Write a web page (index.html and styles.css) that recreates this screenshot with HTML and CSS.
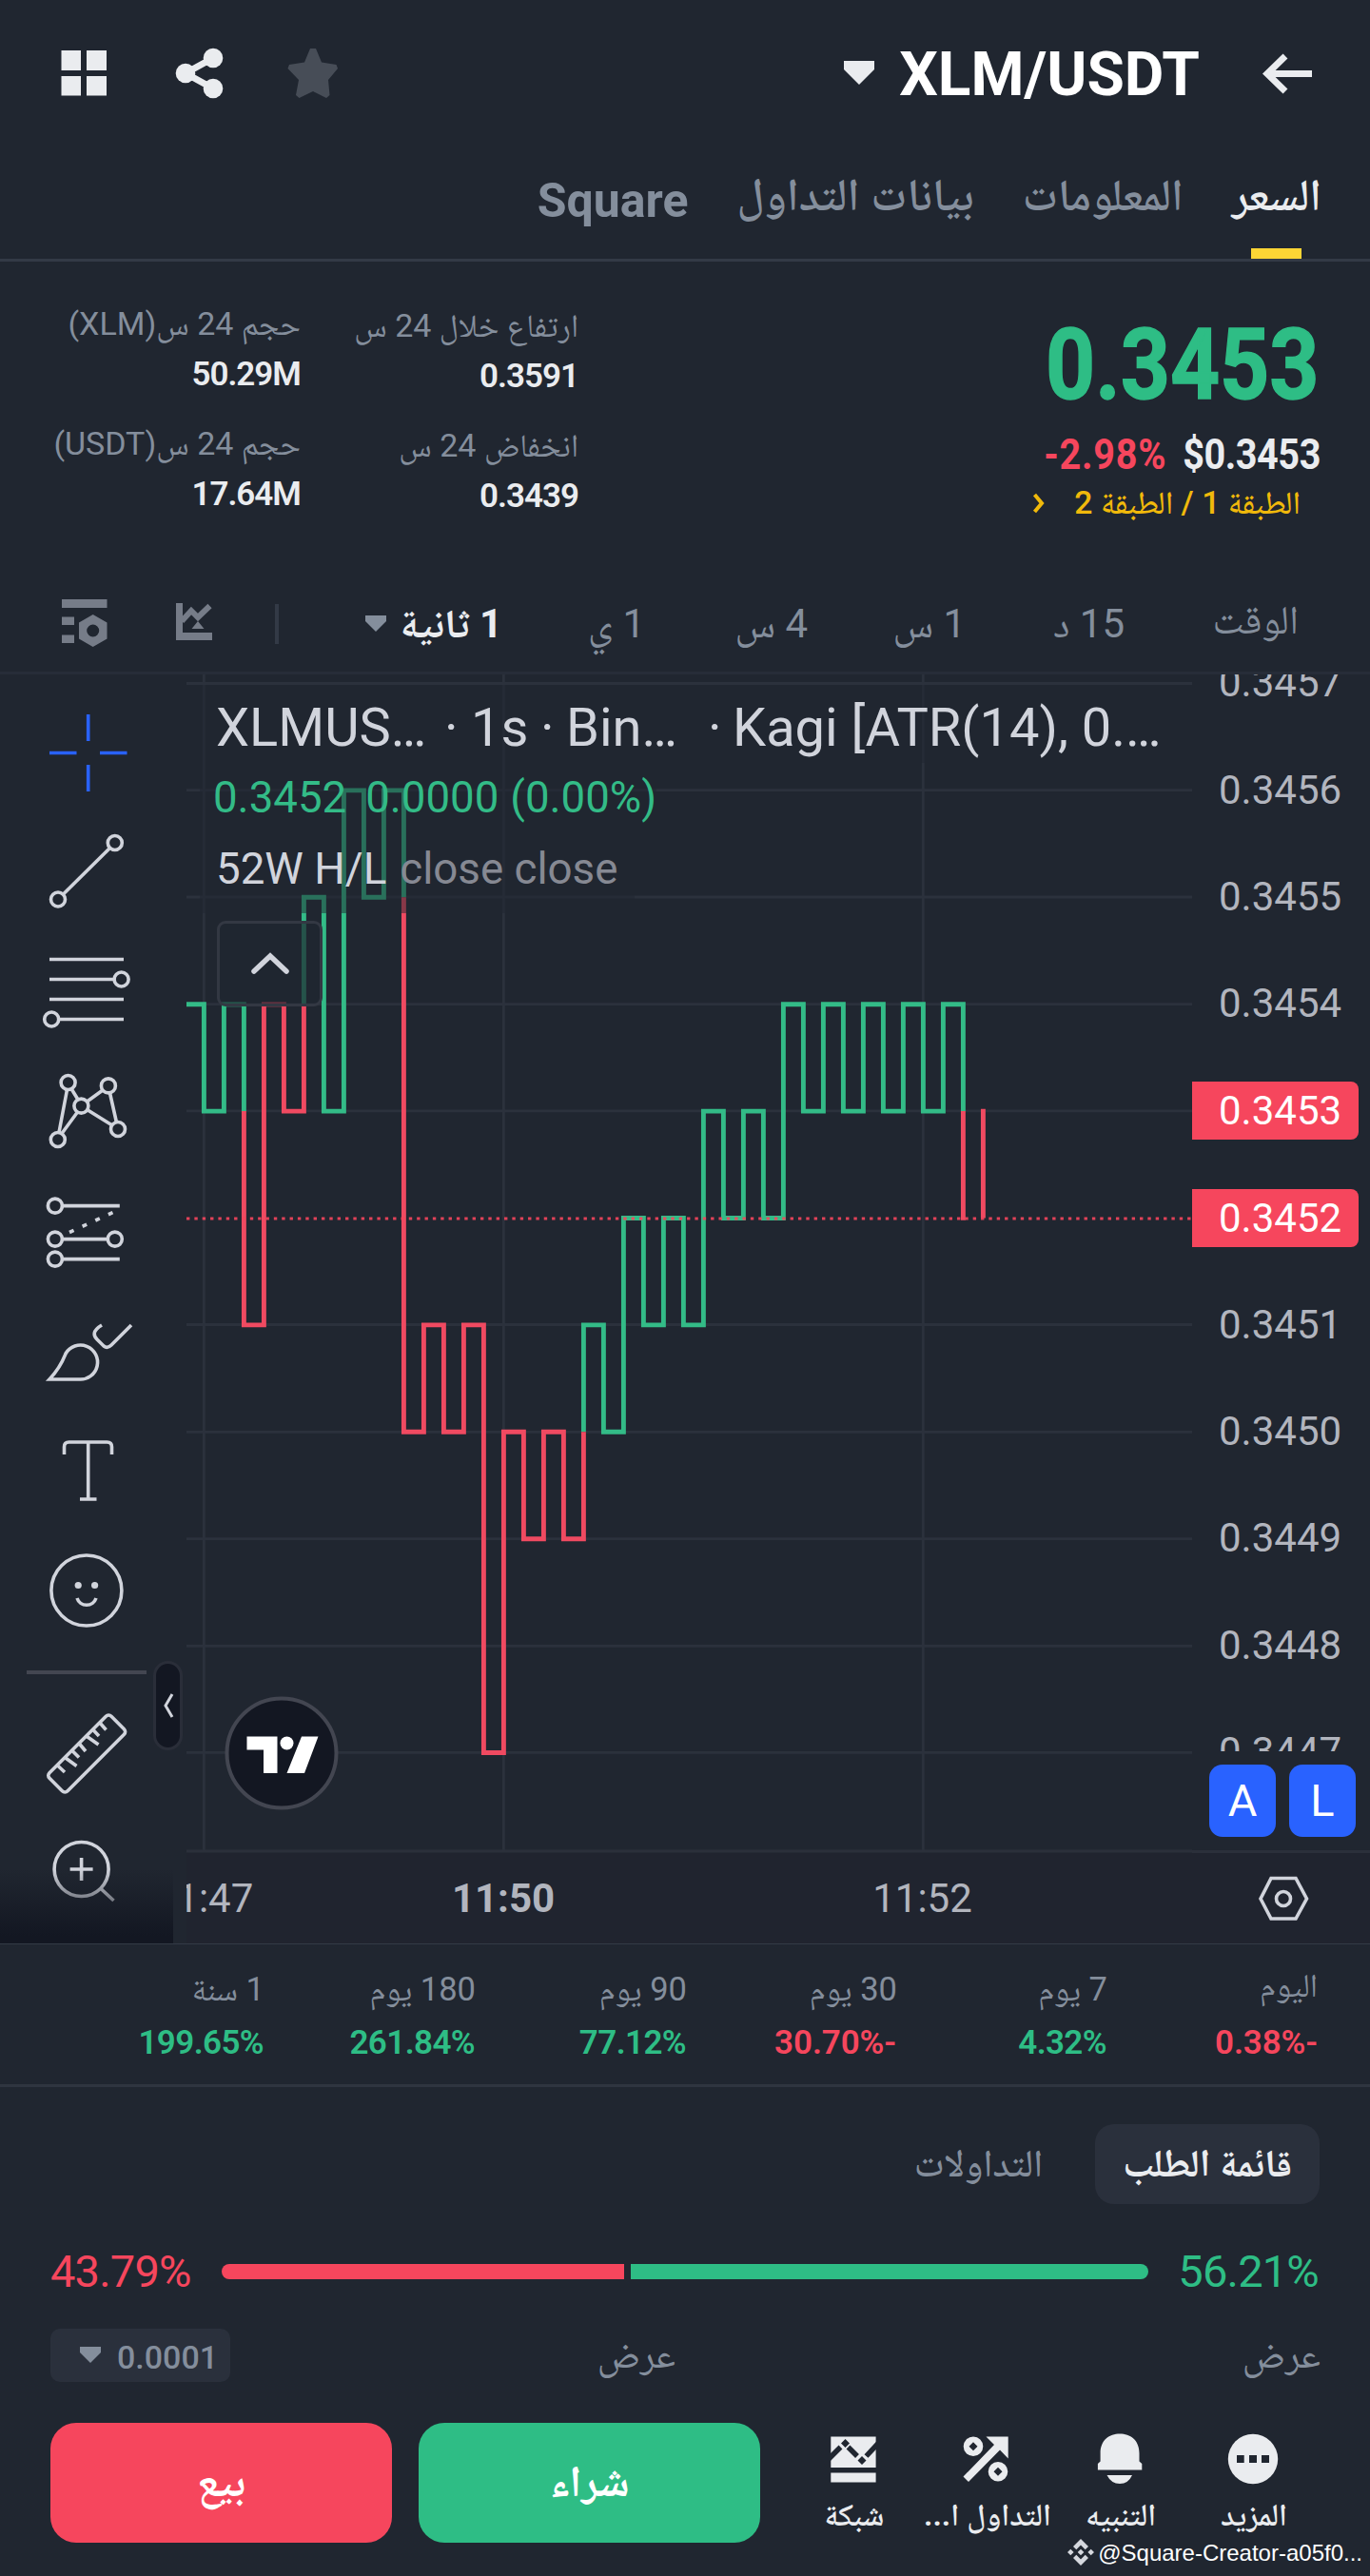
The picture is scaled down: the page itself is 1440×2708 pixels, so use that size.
FILE: index.html
```html
<!DOCTYPE html>
<html lang="ar">
<head>
<meta charset="utf-8">
<title>XLM/USDT</title>
<link rel="stylesheet" href="styles.css">
</head>
<body>
<header class="header">
  <svg class="header-actions" viewBox="53 40 320 74" fill="#eaecef">
    <path d="M64.500 53H85V74H64.500ZM91 53H112V74H91ZM64.500 80H85V100.500H64.500ZM91 80H112V100.500H91Z"/>
    <path d="M224 61 195 77 224 93" fill="none" stroke="#eaecef" stroke-width="7"/>
    <circle cx="224" cy="61" r="10.300"/><circle cx="195" cy="77" r="10.300"/><circle cx="224" cy="93" r="10.300"/>
    <path fill="#474d57" d="M326 51H332L338 65.500 353.500 68 355 72 345 84 346.500 100 343 103 329 96 314.500 103 311 100 314 84 302.500 72 304 68 320 65.500Z"/>
  </svg>
  <div class="pair">
    <svg width="32" height="26" viewBox="887 64 32 26"><path fill="#eaecef" d="M887 64H919V73L903 89 887 73Z"/></svg>
    <h1>XLM/USDT</h1>
    <svg class="back" width="54" height="44" viewBox="1326 55 54 44" fill="none" stroke="#eaecef" stroke-width="7"><path d="M1351 59 1332 77.500 1351 96M1332 77.500H1379"/></svg>
  </div>
</header>

<nav class="tabs">
  <span class="tab latin">Square</span>
  <span class="tab wide">بيانات التداول</span>
  <span class="tab">المعلومات</span>
  <span class="tab active">السعر</span>
</nav>

<section class="summary">
  <div class="stats volume">
    <span class="label" dir="rtl">حجم 24 س(XLM)</span><b>50.29M</b>
    <span class="label second" dir="rtl">حجم 24 س(USDT)</span><b>17.64M</b>
  </div>
  <div class="stats range">
    <span class="label" dir="rtl">ارتفاع خلال 24 س</span><b>0.3591</b>
    <span class="label second" dir="rtl">انخفاض 24 س</span><b>0.3439</b>
  </div>
  <div class="price">
    <div class="last">0.3453</div>
    <div class="change"><span class="down">-2.98%</span><span>$0.3453</span></div>
    <div class="layers">
      <svg width="14" height="22" viewBox="0 0 14 22"><path d="M2.500 2 10 11 2.500 20" fill="none" stroke="#f0b90b" stroke-width="4"/></svg>
      <span dir="rtl">الطبقة 1 / الطبقة 2</span>
    </div>
  </div>
</section>

<div class="intervals">
  <svg width="150" height="60" viewBox="0 626 150 60" fill="#767c88">
    <path d="M65 630H112.500V639H65ZM65 648.500H78V657H65ZM65 667.500H78V676H65Z"/>
    <path fill-rule="evenodd" d="M97.700 646 112.500 654.500V671.500L97.700 680 83 671.500V654.500ZM97.700 656.500A6.500 6.500 0 1 0 97.700 669.500 6.500 6.500 0 1 0 97.700 656.500Z"/>
  </svg>
  <svg width="120" height="60" viewBox="150 626 120 60" fill="#767c88">
    <path d="M185 634H192V665H223V673H185ZM208 653 214.500 661H201.500Z"/>
    <path d="M191 653 201 642 208 649 220.500 637" fill="none" stroke="#767c88" stroke-width="6"/>
  </svg>
  <i class="rule"></i>
  <svg class="caret" width="22" height="18" viewBox="0 0 22 18"><path fill="#848e9c" d="M0 0H22V6L11 17 0 6Z"/></svg>
  <span class="active" dir="rtl">1 ثانية</span>
  <span dir="rtl">1 ي</span>
  <span dir="rtl">4 س</span>
  <span dir="rtl">1 س</span>
  <span dir="rtl">15 د</span>
  <span class="word" dir="rtl">الوقت</span>
</div>

<section class="chart">
  <div class="tools">
    <svg height="131" viewBox="0 709 182 131" class="cross"><path d="M92.700 751V779M92.700 804V832M52 791.500H80.500M105 791.500H133.500"/></svg>
    <svg height="120" viewBox="0 840 182 120"><circle cx="61" cy="945.500" r="7.500"/><circle cx="120.800" cy="886" r="7.500"/><path d="M66.500 940 115.500 891.500"/></svg>
    <svg height="150" viewBox="0 960 182 150"><path d="M52 1008.500H130M52 1029.500H120M52 1050.500H130M62 1071.500H130"/><circle cx="127.600" cy="1029.500" r="7.500"/><circle cx="54.200" cy="1071.500" r="7.500"/></svg>
    <svg height="120" viewBox="0 1110 182 120"><path d="M70.500 1145.500 62 1190.500M75 1144.500 82 1156M108 1146 91.500 1158M115.500 1149 122.500 1180M91.500 1166.500 118 1183M81.500 1169 65 1191.500"/><circle cx="71.600" cy="1138" r="7.500"/><circle cx="113.900" cy="1141.400" r="7.500"/><circle cx="85.400" cy="1162.600" r="7.500"/><circle cx="60.800" cy="1198" r="7.500"/><circle cx="124" cy="1187" r="7.500"/></svg>
    <svg height="130" viewBox="0 1230 182 130"><path d="M65.500 1267.600H125.800M65.500 1302.600H113.300M65.500 1323.600H125.800"/><path stroke-dasharray="5 10" d="M73 1295.500 121 1273.500"/><circle cx="57.900" cy="1267.600" r="7.500"/><circle cx="57.900" cy="1302.600" r="7.500"/><circle cx="120.800" cy="1302.600" r="7.500"/><circle cx="57.900" cy="1323.600" r="7.500"/></svg>
    <svg height="120" viewBox="0 1360 182 120"><path d="M52 1450C64 1437 67 1428 69 1423A18 18 0 1 1 83 1450ZM107 1393C97 1399 98 1404 102 1408L109 1415Q113 1418 117 1414L138 1393"/></svg>
    <svg height="130" viewBox="0 1480 182 130"><path d="M67.500 1529V1521Q67.500 1516 72.500 1516H112.500Q117.500 1516 117.500 1521V1529M92.700 1516V1576M84 1576H101.500"/></svg>
    <svg height="146" viewBox="0 1610 182 146"><circle cx="90.900" cy="1672" r="37"/><path d="M81 1680A10.500 10.500 0 0 0 101 1680"/><g fill="#d1d4dc" stroke="none"><circle cx="82.200" cy="1666.500" r="3.600"/><circle cx="99.600" cy="1666.500" r="3.600"/></g></svg>
    <hr>
    <svg height="150" viewBox="0 1760 182 150"><rect x="-46" y="-13.500" width="92" height="27" rx="4" transform="translate(91.200 1843.500) rotate(-45)"/><path d="M59.500 1856 68 1864M67.500 1848 80.500 1857.500M75 1840.500 83 1848.500M82.500 1833 90 1842M90 1825.500 103.500 1835M97 1818.500 104 1826M104 1811 111.500 1819.500" transform="translate(0 -1)"/></svg>
    <svg height="133" viewBox="0 1910 182 133"><circle cx="85.600" cy="1965" r="28.500"/><path d="M85.600 1953V1977M73.600 1965H97.600M106 1985.500 119.500 1998"/></svg>
    <div class="fade"></div>
    <div class="handle"><svg width="12" height="28" viewBox="0 0 12 28"><path d="M10 2 3 14 10 26" fill="none" stroke="#d1d4dc" stroke-width="3"/></svg></div>
  </div>

  <div class="plot">
    <svg class="series" width="1057" height="1239" viewBox="196 709 1057 1239" fill="none">
      <path stroke="#2b313c" stroke-width="2.800" d="M196 718.500H1253M196 830.700H1253M196 943H1253M196 1055.600H1253M196 1167.800H1253M196 1392.500H1253M196 1505.300H1253M196 1617.600H1253M196 1730.300H1253M196 1842.300H1253M214.400 706V1946M529.400 706V1946M970.300 706V1946"/>
      <path stroke="#2b303b" stroke-width="3" d="M196 1946H1253"/>
      <g class="kagi" transform="translate(214.400 718.500) scale(21 112.400)">
        <path class="up" d="M-.9 3H0V4H1V3H2V4M5 3V2H6V4H7V1H8V2H9V1H10V2M19 7V6H20V7H21V5H22V6H23V5H24V6H25V4H26V5H27V4H28V5H29V3H30V4H31V3H32V4H33V3H34V4H35V3H36V4H37V3H38V4"/>
        <path class="dn" d="M2 4V6H3V3H4V4H5V3M10 2V7H11V6H12V7H13V6H14V10H15V7H16V8H17V7H18V8H19V7M38 4V5.020M39 3.980V5"/>
      </g>
      <path stroke="#f6465d" stroke-width="3" stroke-dasharray="3.400 4.950" opacity=".9" d="M196 1281H1253"/>
    </svg>
    <div class="legend">
      <div class="line title"><span>XLMUS…</span><span>·</span><span>1s</span><span>·</span><span>Bin…</span><span>·</span><span>Kagi [ATR(14), 0.…</span></div>
      <div class="line quote"><span>0.3452</span><span>0.0000</span><span>(0.00%)</span></div>
      <div class="line study"><span>52W H/L</span><span class="muted">close close</span></div>
      <div class="collapse"><svg width="42" height="26" viewBox="0 0 42 26"><path d="M4 21 21 5 38 21" fill="none" stroke="#d1d4dc" stroke-width="5.500" stroke-linecap="round"/></svg></div>
    </div>
    <svg class="tv" width="120" height="124" viewBox="0 0 120 124">
      <circle cx="60" cy="62" r="57.500" fill="#131722" stroke="#434651" stroke-width="4"/>
      <path fill="#fff" d="M23.500 44.500H55.500V83H41V58.500H23.500ZM81 44.500H98.500L84 83H65.500Z"/><circle cx="65.500" cy="51.500" r="7" fill="#fff"/>
    </svg>
  </div>

  <div class="scale">
    <div class="prices">
      <span>0.3457</span><span>0.3456</span><span>0.3455</span><span>0.3454</span><span><b>0.3453</b></span><span><b>0.3452</b></span><span>0.3451</span><span>0.3450</span><span>0.3449</span><span>0.3448</span><span>0.3447</span>
    </div>
    <div class="modes"><span>A</span><span>L</span></div>
  </div>

  <div class="times"><span>11:47</span><b>11:50</b><span>11:52</span></div>
  <div class="gear">
    <svg width="54" height="48" viewBox="1322 1972 54 48" fill="none" stroke="#d1d4dc" stroke-width="3.600"><path d="M1336 1974.500H1362L1373.500 1996 1362 2017H1336L1325 1996Z"/><circle cx="1349" cy="1996" r="7.500"/></svg>
  </div>
</section>

<section class="periods">
  <div><span dir="rtl">1 سنة</span><b class="up">199.65%</b></div>
  <div><span dir="rtl">180 يوم</span><b class="up">261.84%</b></div>
  <div><span dir="rtl">90 يوم</span><b class="up">77.12%</b></div>
  <div><span dir="rtl">30 يوم</span><b class="down">30.70%-</b></div>
  <div><span dir="rtl">7 يوم</span><b class="up">4.32%</b></div>
  <div><span class="word" dir="rtl">اليوم</span><b class="down">0.38%-</b></div>
</section>

<nav class="book-tabs">
  <span>التداولات</span>
  <span class="active">قائمة الطلب</span>
</nav>

<div class="ratio">
  <span class="down">43.79%</span>
  <div class="bar"><i class="sell-part"></i><i class="buy-part"></i></div>
  <span class="up">56.21%</span>
</div>

<div class="book-head">
  <div class="step"><svg width="22" height="18" viewBox="0 0 22 18"><path fill="#848e9c" d="M0 0H22V6L11 17 0 6Z"/></svg><span>0.0001</span></div>
  <span class="mid">عرض</span>
  <span>عرض</span>
</div>

<footer class="footer">
  <button class="sell">بيع</button>
  <button class="buy">شراء</button>
  <div class="links">
    <div><svg width="50" height="54" viewBox="872 2558 50 54"><path fill="#eaecef" d="M873.300 2561.500H920.600V2594H873.300ZM873.300 2599.500H920.600V2609.500H873.300Z"/><path fill="none" stroke="#202630" stroke-width="5.500" d="M871 2585 883.500 2572.500M891.500 2572.500 901 2582M910.500 2582 923 2568.500"/><path fill="#202630" d="M888.500 2564 893 2568.500 888.500 2573 884 2568.500ZM906 2582 910.500 2586.500 906 2591 901.500 2586.500Z"/></svg><span dir="rtl">شبكة</span></div>
    <div><svg width="50" height="54" viewBox="1013 2558 50 54"><g fill="#eaecef"><path d="M1037.500 2561.500H1060.700V2584.500L1052 2575.500 1019 2609 1013.500 2603.500 1046 2570Z"/><path fill-rule="evenodd" d="M1024 2561.500A10.300 10.300 0 1 0 1024 2582.100 10.300 10.300 0 1 0 1024 2561.500ZM1024 2567.300 1028.500 2571.800 1024 2576.300 1019.500 2571.800ZM1050 2588A10.300 10.300 0 1 0 1050 2608.600 10.300 10.300 0 1 0 1050 2588ZM1050 2593.800 1054.500 2598.300 1050 2602.800 1045.500 2598.300Z"/></g></svg><span dir="rtl">التداول ا...</span></div>
    <div><svg width="50" height="54" viewBox="1152 2558 50 54" fill="#eaecef"><path d="M1156.600 2587.500V2579C1156.600 2565 1166 2558.500 1177 2558.500S1197.500 2565 1197.500 2579V2587.500L1200.300 2590V2596.500H1153.900V2590ZM1163.500 2602H1190Q1186 2611 1177 2611T1163.500 2602Z"/></svg><span>التنبيه</span></div>
    <div><svg width="54" height="54" viewBox="1290 2558 54 54"><circle cx="1317" cy="2585" r="26.200" fill="#eaecef"/><path fill="#202630" d="M1300 2581H1307.700V2589H1300ZM1313 2581H1321V2589H1313ZM1326 2581H1334V2589H1326Z"/></svg><span>المزيد</span></div>
  </div>
  <div class="watermark">
    <svg width="28" height="28" viewBox="0 0 28 28" fill="#d5d8de"><path d="M14 0 22 8 18.700 11.300 14 6.600 9.300 11.300 6 8ZM14 28 22 20 18.700 16.700 14 21.400 9.300 16.700 6 20ZM14 10.700 17.300 14 14 17.300 10.700 14ZM3.300 10.700 6.600 14 3.300 17.300 0 14ZM24.700 10.700 28 14 24.700 17.300 21.400 14Z"/></svg>
    <span>@Square-Creator-a05f0...</span>
  </div>
</footer>
</body>
</html>
```
FILE: styles.css
```css
* { box-sizing: border-box; }
body {
  margin: 0;
  width: 1440px;
  height: 2708px;
  overflow: hidden;
  background: #202630;
  color: #eaecef;
  font-family: Roboto, "Noto Naskh Arabic", "Noto Sans Arabic", sans-serif;
  white-space: nowrap;
}
svg { display: block; flex: none; }
.up { color: #2ebd85; }
.down { color: #f6465d; }

.header { display: flex; justify-content: space-between; height: 154px; padding: 0 60px 0 53px; align-items: center; }
.header-actions { width: 320px; height: 74px; }
.pair { display: flex; align-items: center; }
.pair h1 { margin: 0 65px 0 26px; font-size: 64px; line-height: 80px; font-weight: 700; color: #fff; padding-top: 4px; }

.tabs { display: flex; justify-content: flex-end; height: 121px; padding-right: 51px; border-bottom: 3px solid #333a46; gap: 51px; font-size: 47px; font-weight: 600; line-height: 60px; color: #848e9c; padding-top: 21px; }
.tab.wide { font-size: 48px; }
.tab.latin { font-size: 50px; font-weight: 700; padding-top: 6px; }
.tab.active { color: #eaecef; display: flex; flex-direction: column; align-items: center; }
.tab.active::after { content: ""; width: 53px; height: 11px; margin-top: 26px; background: #fcd535; }

.summary { display: flex; height: 325px; padding-right: 53px; }
.stats { display: flex; flex-direction: column; align-items: flex-end; padding-top: 43px; font-size: 34px; line-height: 49px; }
.stats.volume { width: 316px; padding-top: 41px; }
.stats.range { width: 292px; }
.stats .label { color: #848e9c; }
.stats .second { margin-top: 24px; }
.stats b { font-size: 35px; font-weight: 600; letter-spacing: -1px; padding-top: 4px; }
.price { margin-left: auto; display: flex; flex-direction: column; align-items: flex-end; padding-top: 61px; }
.last { font-size: 104px; line-height: 95px; font-weight: 700; color: #2ebd85; -webkit-text-stroke: 1.5px #2ebd85; transform: scaleX(.875); transform-origin: right; }
.change { display: flex; gap: 19px; margin-top: 17px; font-size: 44px; line-height: 60px; font-weight: 700; transform: scaleX(.9); transform-origin: right; margin-right: -1px; }
.change .down { letter-spacing: .8px; }
.change span + span { letter-spacing: -.5px; }
.layers { display: flex; align-items: center; gap: 30px; padding-right: 20px; font-size: 33.7px; line-height: 46px; font-weight: 500; color: #f0b90b; margin-top: -2px; }

.intervals { display: grid; grid-template-columns: 150px 120px 40px 96px 122px 150px 171px 166px 167px 185px; height: 106px; padding-top: 20px; font-size: 42px; line-height: 72px; color: #848e9c; align-items: center; align-content: start; }
.intervals span { text-align: right; }
.intervals .active { color: #eaecef; font-weight: 700; font-size: 42px; }
.intervals .word { font-size: 42px; padding: 0 2px 8px 0; line-height: 64px; }
.intervals .caret { justify-self: end; }
.rule { width: 4px; height: 42px; margin-left: 19px; background: #333a46; }

.chart { display: grid; grid-template-columns: 196px 1057px 187px; grid-template-rows: 1239px 95px; border-top: 3px solid #272d38; }
.tools { grid-row: 1 / 3; position: relative; height: 1334px; }
.tools > svg { width: 182px; fill: none; stroke: #d1d4dc; stroke-width: 3.6px; }
.tools .cross { stroke: #2962ff; }
.tools hr { width: 126px; height: 4px; margin: 0 0 0 28px; border: 0; background: #434651; }
.fade { position: absolute; left: 0; bottom: 0; width: 182px; height: 78px; background: linear-gradient(rgba(19, 23, 34, 0), #131722 90%); }
.handle { position: absolute; left: 161px; top: 1037px; width: 31px; height: 94px; border: 3px solid #2a2e39; border-radius: 16px; background: #131722; display: flex; align-items: center; justify-content: center; }

.plot { position: relative; }
.kagi path { stroke-width: 4.9px; vector-effect: non-scaling-stroke; stroke: #33bb87; }
.kagi .dn { stroke: #f04a61; }
.legend { position: absolute; left: 14px; top: 11px; color: #d1d4dc; }
.line { width: max-content; background: rgba(32, 38, 48, .5); padding-left: 17px; }
.title { display: grid; grid-template-columns: 240px 28px 73px 27px 149px 26px 1fr; font-size: 56px; line-height: 90px; height: 82px; }
.title span { height: 82px; }
.quote { display: flex; gap: 20px; padding-left: 14px; font-size: 45.6px; line-height: 74px; color: #33bb87; }
.quote span:nth-child(2) { margin-right: -8px; }
.study { display: flex; gap: 14px; font-size: 45.7px; line-height: 76px; padding-bottom: 8px; padding-right: 18px; }
.muted { color: #868993; }
.collapse { width: 111px; height: 90px; margin: 8px 0 0 18px; border: 3px solid #333843; border-radius: 9px; background: rgba(32, 38, 48, .7); display: flex; align-items: center; justify-content: center; }
.tv { position: absolute; left: 39.5px; top: 1072px; }

.scale { border-bottom: 3px solid #2b303b; }
.prices { height: 1132px; overflow: hidden; }
.prices span { display: flex; height: 112.4px; align-items: center; padding-left: 28px; font-size: 42px; line-height: 50px; color: #b2b5be; }
.prices span:first-child { margin-top: -47px; }
.prices b { width: 175px; line-height: 61px; margin-left: -28px; padding-left: 28px; font-weight: 400; color: #fff; background: #f6465d; border-radius: 0 8px 8px 0; }
.modes { display: flex; gap: 14px; padding: 14px 0 0 18px; }
.modes span { width: 70px; line-height: 76px; text-align: center; font-size: 47px; border-radius: 14px; background: #2962ff; color: #fff; }
.times { display: flex; overflow: hidden; font-size: 42px; line-height: 95px; color: #b2b5be; background: #20242f; }
.times > * { display: flex; justify-content: center; flex: none; width: 36px; }
.times b { width: 594px; }
.times :last-child { width: 287px; }
.gear { padding: 24px 0 0 69px; background: #20242f; }

.periods { display: grid; grid-template-columns: 277px 222px 222px 221px 221px 222px; height: 151px; border-top: 1px solid #333a46; border-bottom: 3px solid #2f3540; padding-top: 19px; }
.periods div { display: flex; flex-direction: column; align-items: flex-end; }
.periods span { font-size: 34.5px; line-height: 56px; color: #848e9c; margin-right: -1px; }
.periods .word { line-height: 49px; padding-bottom: 7px; margin: 0; }
.periods b { font-size: 35px; line-height: 58px; font-weight: 600; letter-spacing: -.6px; }
.periods .down { letter-spacing: -.1px; }

.book-tabs { display: flex; justify-content: flex-end; gap: 26px; padding: 39px 53px 0 0; font-size: 40.5px; line-height: 82px; color: #848e9c; font-weight: 500; }
.book-tabs span { padding: 0 29px 2px; border-radius: 20px; }
.book-tabs .active { color: #eaecef; background: #2a303c; font-weight: 700; }

.ratio { display: flex; align-items: center; justify-content: space-between; padding: 0 54px 0 53px; margin-top: 41px; font-size: 47px; line-height: 60px; }
.ratio span { letter-spacing: -.8px; }
.bar { display: flex; gap: 7px; width: 974px; height: 16px; }
.bar i { border-radius: 0 8px 8px 0; background: #2ebd85; flex: 1; }
.bar .sell-part { flex: none; width: 423px; background: #f6465d; border-radius: 8px 0 0 8px; }

.book-head { display: grid; grid-template-columns: 189px 468px 678px; align-items: center; padding-left: 53px; margin-top: 30px; height: 56px; font-size: 41px; line-height: 54px; color: #848e9c; }
.book-head > span { text-align: right; padding-bottom: 2px; }
.step { display: flex; align-items: center; gap: 17px; padding-left: 31px; height: 56px; border-radius: 10px; background: #2a303c; font-size: 34px; font-weight: 500; }
.step span { padding-top: 3px; }

.footer { position: relative; display: flex; gap: 28px; padding: 43px 0 0 53px; height: 204px; }
.footer button { width: 359px; height: 126px; border: 0; border-radius: 27px; color: #fff; font: 700 46px/122px Roboto, "Noto Naskh Arabic", sans-serif; padding: 0 0 4px; }
.sell { background: #f6465d; }
.buy { background: #2ebd85; }
.links { display: grid; grid-template-columns: repeat(4, 140px); padding-top: 11px; }
.links div { display: flex; flex-direction: column; align-items: center; font-size: 33px; line-height: 50px; gap: 7px; font-weight: 600; }
.links span { padding-left: 2px; }
.watermark { position: absolute; right: 8px; bottom: 9px; display: flex; align-items: center; gap: 4px; font: 24px/30px "Liberation Sans", sans-serif; color: #fff; }
.watermark span { padding-top: 2px; }
```
